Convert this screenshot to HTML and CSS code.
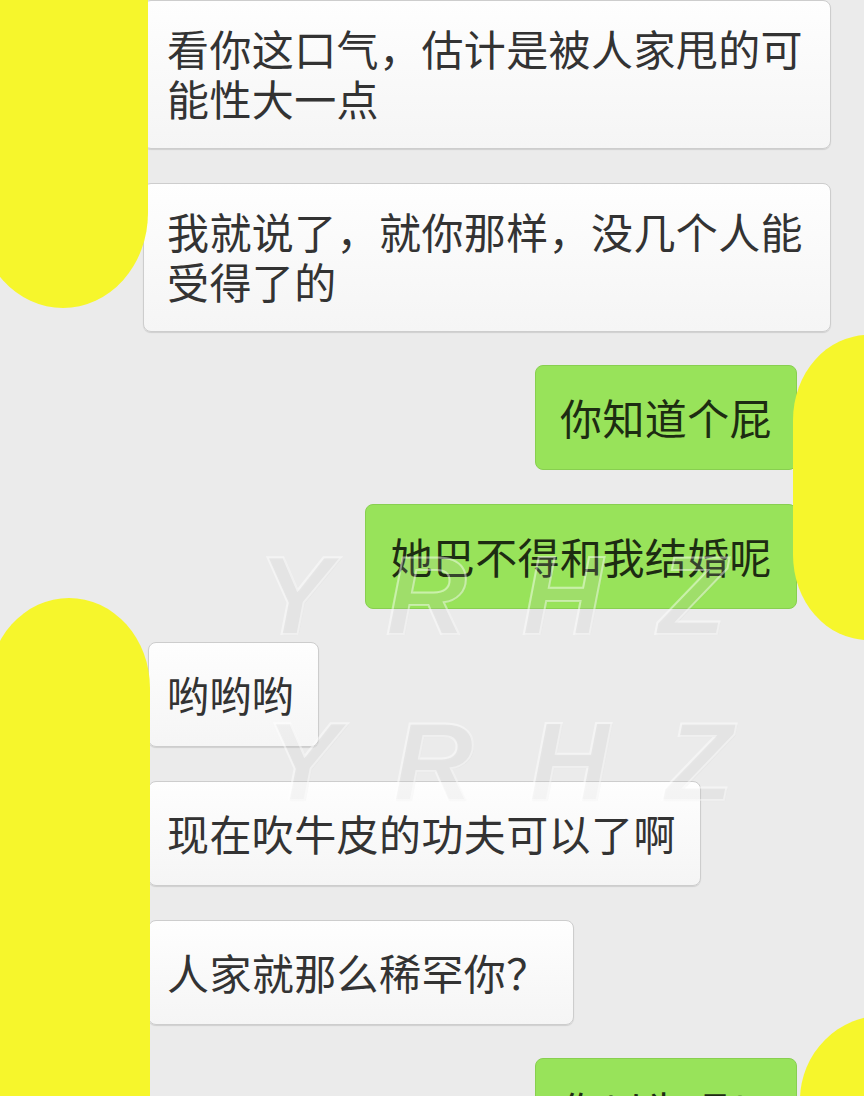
FILE: index.html
```html
<!DOCTYPE html>
<html lang="zh-CN">
<head>
    <meta charset="UTF-8">
    <meta name="viewport" content="width=device-width, initial-scale=1.0">
    <title>聊天记录</title>
    <link rel="stylesheet" href="styles.css">
</head>
<body>
  <div id="chat">

    <div class="row left">
      <div class="bubble white multi">看你这口气，估计是被人家甩的可能性大一点</div>
    </div>
    <div class="row left">
      <div class="bubble white multi">我就说了，就你那样，没几个人能受得了的</div>
    </div>
    <div class="row right">
      <div class="bubble green">你知道个屁</div>
    </div>
    <div class="row right">
      <div class="bubble green">她巴不得和我结婚呢</div>
    </div>
    <div class="row left shift">
      <div class="bubble white">哟哟哟</div>
    </div>
    <div class="row left shift">
      <div class="bubble white">现在吹牛皮的功夫可以了啊</div>
    </div>
    <div class="row left shift">
      <div class="bubble white">人家就那么稀罕你？</div>
    </div>
    <div class="row right">
      <div class="bubble green">你以为呢？</div>
    </div>

    <!-- scribbles over the avatars -->
    <div class="blob blob-a"></div>
    <div class="blob blob-b"></div>
    <div class="blob blob-c"></div>
    <div class="blob blob-d"></div>

    <div class="mark mark-1">Y R H Z</div>
    <div class="mark mark-2">Y R H Z</div>
  </div>
</body>
</html>
```

FILE: styles.css
```css
body {
  margin: 0;
  background: #ebebeb;
  font-family: "Noto Sans CJK SC", "Noto Sans", sans-serif;
  overflow: hidden;
}

#chat {
  position: relative;
  height: 1096px;
  overflow: hidden;
  display: flex;
  flex-direction: column;
  gap: 33.6px;
}

.row {
  display: flex;
}

.row.left {
  padding-left: 143px;
}

.row.right {
  justify-content: flex-end;
  padding-right: 67px;
}

.row.shift {
  padding-left: 148px;
}

.bubble {
  box-sizing: border-box;
  max-width: 688px;
  font-size: 42px;
  letter-spacing: 0.4px;
  line-height: 50px;
  padding: 26px 24px 27px 23px;
  border-radius: 8px;
  border: 1px solid;
}

.bubble.multi {
  padding-top: 22px;
  padding-bottom: 25px;
}

.shift .bubble {
  padding-left: 18px;
}

.white {
  color: #333;
  background: linear-gradient(#fefefe, #f5f5f5);
  border-color: #cdcdcd;
  box-shadow: 0 1px 1px rgba(0, 0, 0, 0.12);
}

.green {
  color: #1d2c12;
  background: #98e35a;
  border-color: #88cf50;
  padding-left: 24px;
}

.blob {
  position: absolute;
  background: #f6f62c;
}

.blob-a {
  left: -22px;
  top: -100px;
  width: 170px;
  height: 408px;
  border-radius: 85px / 95px;
}

.blob-b {
  left: 793px;
  top: 335px;
  width: 150px;
  height: 305px;
  border-radius: 75px / 85px;
}

.blob-c {
  left: -12px;
  top: 598px;
  width: 162px;
  height: 620px;
  border-radius: 81px / 90px;
}

.blob-d {
  left: 800px;
  top: 1015px;
  width: 170px;
  height: 200px;
  border-radius: 85px;
}

.mark {
  position: absolute;
  left: 258px;
  font-family: "Liberation Sans", sans-serif;
  font-style: italic;
  font-weight: bold;
  font-size: 112px;
  line-height: 1;
  word-spacing: 24px;
  color: rgba(255, 255, 255, 0.12);
  -webkit-text-stroke: 2px rgba(255, 255, 255, 0.45);
  text-shadow: 1px 1px 1px rgba(0, 0, 0, 0.04);
  pointer-events: none;
}

.mark-1 {
  top: 540px;
}

.mark-2 {
  top: 706px;
  left: 265px;
}
```
